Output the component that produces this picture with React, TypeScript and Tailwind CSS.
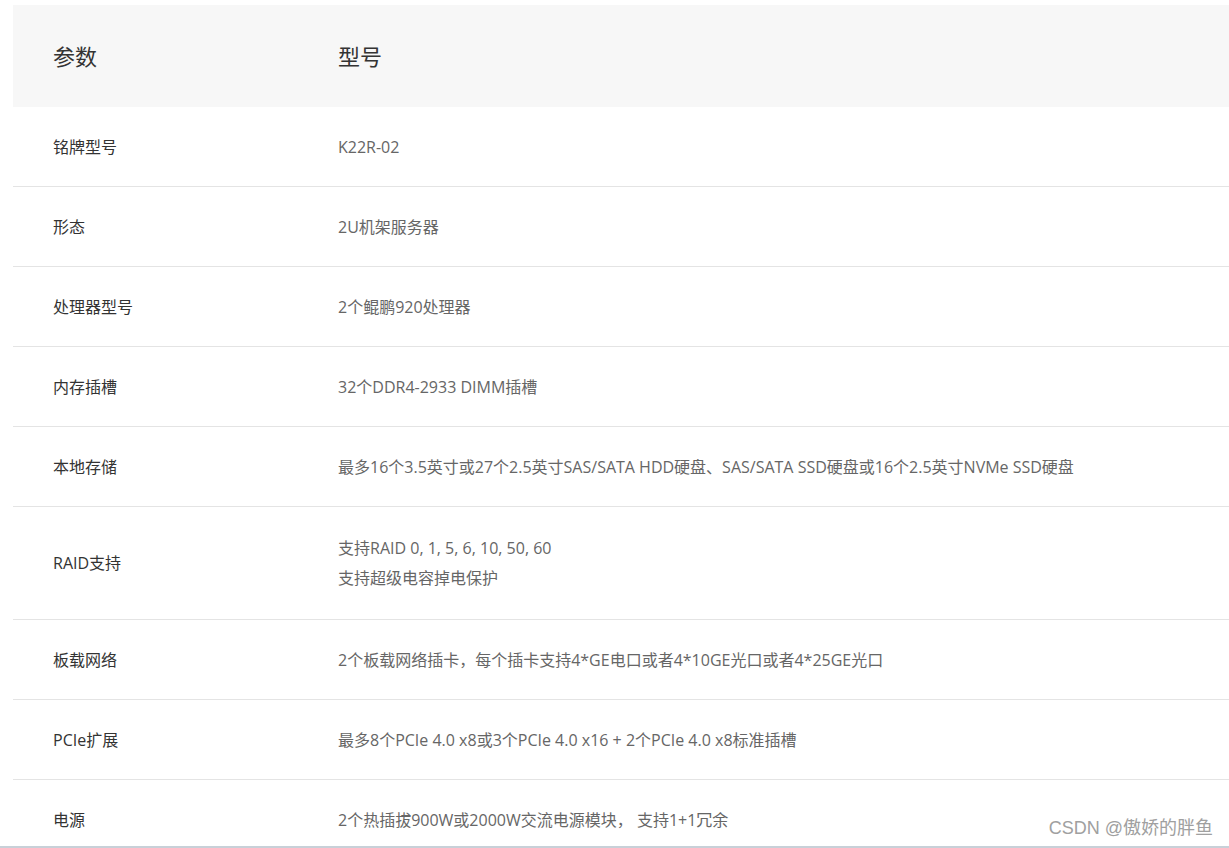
import React from "react";

const rows: { name: string; value: string[] }[] = [
  { name: "铭牌型号", value: ["K22R-02"] },
  { name: "形态", value: ["2U机架服务器"] },
  { name: "处理器型号", value: ["2个鲲鹏920处理器"] },
  { name: "内存插槽", value: ["32个DDR4-2933 DIMM插槽"] },
  {
    name: "本地存储",
    value: ["最多16个3.5英寸或27个2.5英寸SAS/SATA HDD硬盘、SAS/SATA SSD硬盘或16个2.5英寸NVMe SSD硬盘"],
  },
  { name: "RAID支持", value: ["支持RAID 0, 1, 5, 6, 10, 50, 60", "支持超级电容掉电保护"] },
  { name: "板载网络", value: ["2个板载网络插卡，每个插卡支持4*GE电口或者4*10GE光口或者4*25GE光口"] },
  { name: "PCIe扩展", value: ["最多8个PCIe 4.0 x8或3个PCIe 4.0 x16 + 2个PCIe 4.0 x8标准插槽"] },
  { name: "电源", value: ["2个热插拔900W或2000W交流电源模块， 支持1+1冗余"] },
];

export default function App() {
  return (
    <div
      className="relative h-[848px] overflow-hidden bg-white pt-[5px] pl-[13px] border-b-2 border-[#c8d0d8]"
      style={{ fontFamily: '"Open Sans", "Noto Sans CJK SC", sans-serif' }}
    >
      <div className="flex h-[102px] items-center bg-[#f7f7f7] text-[22px] text-[#333]">
        <div className="w-[285px] pl-[40px]">参数</div>
        <div className="pl-[40px]">型号</div>
      </div>
      {rows.map((r) => (
        <div
          key={r.name}
          className={
            r.value.length > 1
              ? "flex items-center border-b border-[#e4e4e4] py-[26px]"
              : "flex h-[80px] items-center border-b border-[#e4e4e4]"
          }
        >
          <div className="w-[285px] pl-[40px] text-[16px] text-[#333]">{r.name}</div>
          <div className="pl-[40px] text-[16px] leading-[30px] text-[#666]">
            {r.value.map((v) => (
              <div key={v}>{v}</div>
            ))}
          </div>
        </div>
      ))}
      <div
        className="absolute right-[16px] bottom-[4px] text-[18px] text-[#a0a0a0] [text-shadow:0_0_2px_#fff]"
        style={{ fontFamily: '"Liberation Sans", "Noto Sans CJK SC", sans-serif' }}
      >
        CSDN @傲娇的胖鱼
      </div>
    </div>
  );
}
